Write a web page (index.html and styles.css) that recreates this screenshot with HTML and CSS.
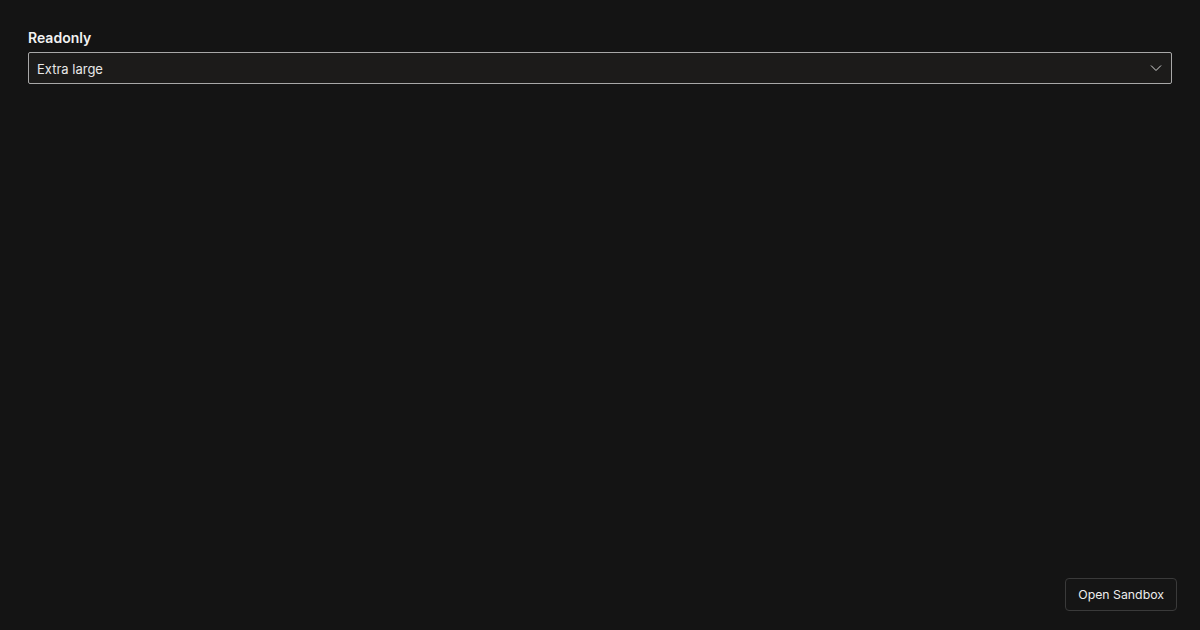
FILE: index.html
```html
<!DOCTYPE html>
<html lang="en">
<head>
    <meta charset="UTF-8">
    <title>Readonly Select</title>
    <link rel="stylesheet" href="styles.css">
</head>
<body>
    <!-- Field -->
    <div class="field">
        <label class="field-label">Readonly</label>
        <div class="select">
            <span class="select-value">Extra large</span>
            <svg class="select-chevron" width="12" height="12" viewBox="0 0 12 12" fill="none">
                <path d="M1 3.5 L6 8.5 L11 3.5" stroke="#d6d6d6" stroke-width="1"/>
            </svg>
        </div>
    </div>

    <!-- Sandbox button -->
    <button class="sandbox-btn">Open Sandbox</button>
</body>
</html>
```

FILE: styles.css
```css
/* General Styles */
body {
    font-family: Inter, "Noto Sans", sans-serif;
    margin: 0;
    padding: 28px;
    background-color: #141414;
    color: #e6e6e6;
    height: 630px;
    box-sizing: border-box;
    overflow: hidden;
}

/* Field */
.field {
    display: flex;
    flex-direction: column;
    gap: 5px;
}

.field-label {
    font-size: 14px;
    font-weight: 600;
    line-height: 18px;
    color: #f2f2f2;
    margin-top: 1px;
}

.select {
    display: flex;
    justify-content: space-between;
    align-items: center;
    height: 32px;
    box-sizing: border-box;
    padding: 0 9px 0 8px;
    background-color: #1c1b1a;
    border: 1px solid #a8a8a8;
    border-radius: 2px;
}

.select-value {
    font-size: 13px;
    color: #e8e8e8;
    padding-top: 2px;
}

/* Sandbox Button */
.sandbox-btn {
    position: fixed;
    right: 23px;
    bottom: 19px;
    height: 33px;
    padding: 0 12px 1px;
    font-family: Inter, "Noto Sans", sans-serif;
    font-size: 12.3px;
    color: #ececec;
    background-color: #151515;
    border: 1px solid #3a3a3a;
    border-radius: 4px;
}
```
